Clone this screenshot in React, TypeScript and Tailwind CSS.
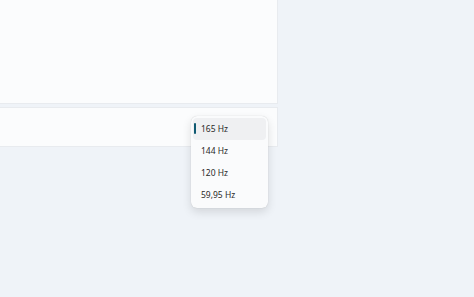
export default function App() {
  const rates = ['165 Hz', '144 Hz', '120 Hz', '59,95 Hz']
  return (
    <div className="relative w-[474px] h-[297px] overflow-hidden bg-[#eff3f8] font-['Noto_Sans',sans-serif]">
      <div className="flex flex-col w-[278px]">
        <div className="h-[104px] bg-[#fbfcfd] border-r border-b border-[#e8ebef]" />
        <div className="h-[40px] mt-[3px] bg-[#fbfcfd] border-r border-t border-b border-[#e8ebef]" />
      </div>

      <div className="absolute left-[191px] top-[116px] w-[77px] rounded-[6px] bg-[#fafbfc] shadow-[0_4px_10px_rgba(0,0,0,0.12),0_0_1px_rgba(0,0,0,0.2)] py-[2px] px-[2px]">
        {rates.map((r, i) => (
          <div
            key={r}
            className={`relative flex items-center h-[22px] pl-[8px] text-[8.5px] text-[#2a2a2a] rounded-[4px] ${i === 0 ? 'bg-[#eff0f2]' : ''}`}
          >
            {i === 0 && <span className="absolute left-[1px] top-[5px] h-[11px] w-[2px] rounded-full bg-[#0f5a72]" />}
            {r}
          </div>
        ))}
      </div>
    </div>
  )
}
